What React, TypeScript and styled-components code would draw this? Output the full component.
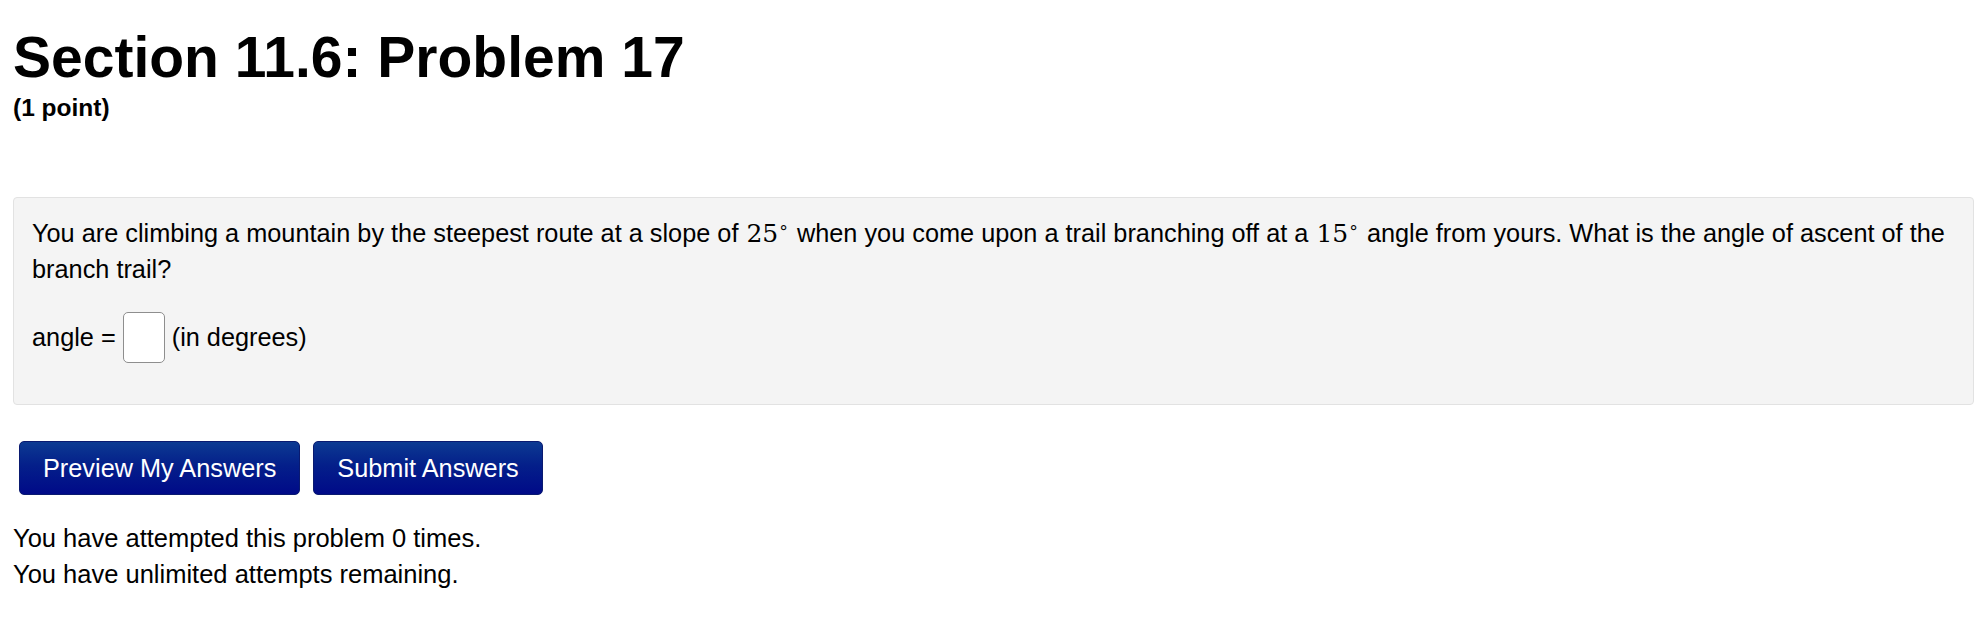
import React from "react";
import styled, { createGlobalStyle } from "styled-components";

const GlobalStyle = createGlobalStyle`
  html, body {
    margin: 0;
    padding: 0;
    background: #ffffff;
  }
  body {
    font-family: "Liberation Sans", Arial, Helvetica, sans-serif;
    color: #000000;
  }
`;

const Page = styled.div`
  padding: 24px 10px 0 13px;
`;

const Title = styled.h1`
  margin: 0;
  font-size: 57px;
  line-height: 67px;
  font-weight: 700;
`;

const Points = styled.div`
  margin-top: 2px;
  font-size: 24.5px;
  line-height: 29px;
  font-weight: 700;
`;

const ProblemPanel = styled.div`
  margin-top: 75px;
  background: #f4f4f4;
  border: 1px solid #e2e2e2;
  border-radius: 4px;
  padding: 18px 8px 41px 18px;
  font-size: 25.3px;
  line-height: 35.6px;
`;

const Para = styled.p`
  margin: 0;
`;

const MathNum = styled.span`
  font-family: "DejaVu Serif", "Liberation Serif", serif;
  font-size: 25px;
  margin: 0 1px;
`;

const Degree = styled.span`
  display: inline-block;
  font-family: "DejaVu Sans", sans-serif;
  font-size: 17px;
  line-height: 1;
  vertical-align: 9px;
`;

const AnswerRow = styled.div`
  display: flex;
  align-items: center;
  gap: 7px;
  margin-top: 25px;
`;

const AnswerBox = styled.input`
  width: 42px;
  height: 51px;
  box-sizing: border-box;
  border: 1px solid #8e8e8e;
  border-radius: 5px;
  background: #ffffff;
  padding: 0;
  outline: none;
`;

const ButtonBar = styled.div`
  display: flex;
  gap: 13px;
  margin: 36px 0 0 6px;
`;

const ActionButton = styled.button`
  height: 54px;
  padding: 0 23px;
  font-family: "Liberation Sans", Arial, sans-serif;
  font-size: 25.3px;
  color: #ffffff;
  background: linear-gradient(to bottom, #0c3a92 0%, #041f8a 45%, #000a88 100%);
  border: 1px solid #0a1a70;
  border-radius: 5px;
  cursor: pointer;
`;

const Attempts = styled.div`
  margin-top: 26px;
  font-size: 25.5px;
  line-height: 35.6px;
`;

const Deg = ({ value }: { value: string }) => (
  <MathNum>
    {value}
    <Degree>∘</Degree>
  </MathNum>
);

export default function App() {
  return (
    <Page>
      <GlobalStyle />
      <Title>Section 11.6: Problem 17</Title>
      <Points>(1 point)</Points>

      <ProblemPanel>
        <Para>
          You are climbing a mountain by the steepest route at a slope of <Deg value="25" /> when you come
          upon a trail branching off at a <Deg value="15" /> angle from yours. What is the angle of ascent
          of the branch trail?
        </Para>
        <AnswerRow>
          <span>angle =</span>
          <AnswerBox type="text" aria-label="angle" />
          <span>(in degrees)</span>
        </AnswerRow>
      </ProblemPanel>

      <ButtonBar>
        <ActionButton>Preview My Answers</ActionButton>
        <ActionButton>Submit Answers</ActionButton>
      </ButtonBar>

      <Attempts>
        You have attempted this problem 0 times.
        <br />
        You have unlimited attempts remaining.
      </Attempts>
    </Page>
  );
}
